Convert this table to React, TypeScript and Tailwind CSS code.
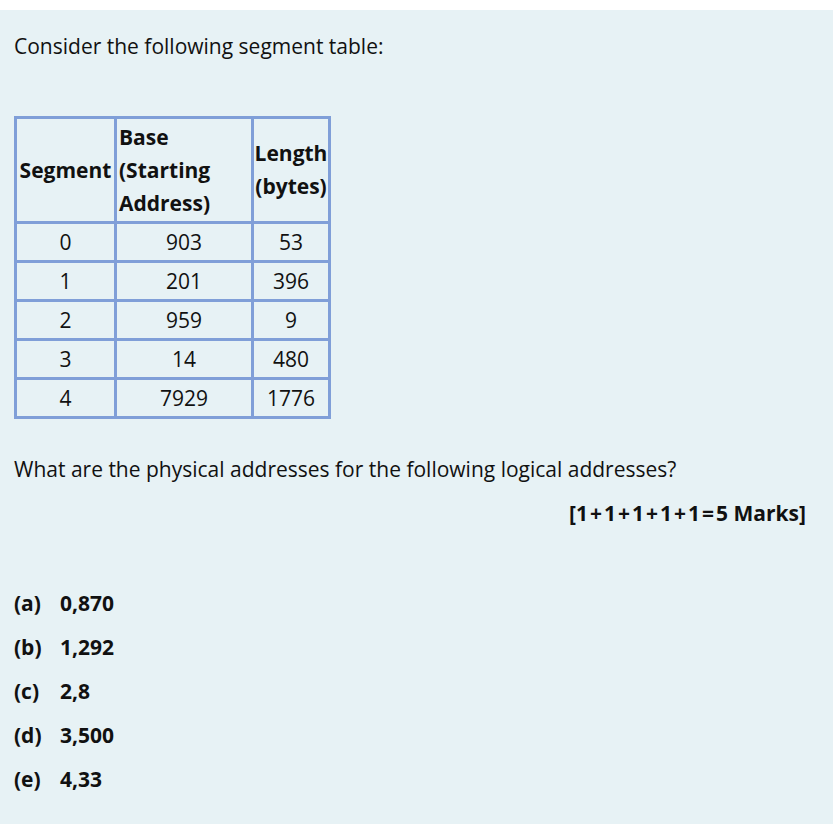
export default function App() {
  const rows = [
    ['0', '903', '53'],
    ['1', '201', '396'],
    ['2', '959', '9'],
    ['3', '14', '480'],
    ['4', '7929', '1776'],
  ];
  const items = [
    ['(a)', '0,870'],
    ['(b)', '1,292'],
    ['(c)', '2,8'],
    ['(d)', '3,500'],
    ['(e)', '4,33'],
  ];
  const cell = 'border-[3px] border-[#809fd8] text-center align-middle p-0';
  const op = 'mx-[2px]';

  return (
    <div className="min-h-[824px] bg-white pt-[10px]" style={{ fontFamily: '"Open Sans", "Noto Sans", sans-serif' }}>
      <div className="min-h-[814px] bg-[#e7f2f5] px-[14px] pt-[22px] text-[#111] text-[21px]">
        <p className="leading-[28px]">Consider the following segment table:</p>

        {/* Segment table */}
        <table className="mt-[56px] border-collapse border-[3px] border-[#809fd8]">
          <thead>
            <tr className="h-[105px]">
              <th className={`${cell} w-[100px] font-bold leading-[33px]`}>Segment</th>
              <th className={`${cell} w-[137px] pl-[2px] text-left font-bold leading-[33px]`}>
                Base
                <br />
                (Starting
                <br />
                Address)
              </th>
              <th className={`${cell} w-[77px] font-bold leading-[33px]`}>
                Length
                <br />
                (bytes)
              </th>
            </tr>
          </thead>
          <tbody>
            {rows.map((r) => (
              <tr key={r[0]} className="h-[39px]">
                {r.map((v, i) => (
                  <td key={i} className={`${cell} pt-[2px]`}>{v}</td>
                ))}
              </tr>
            ))}
          </tbody>
        </table>

        <p className="mt-[36px] leading-[28px]">What are the physical addresses for the following logical addresses?</p>
        <p className="mt-[16px] pr-[13px] text-right font-bold leading-[28px]">
          [1<span className={op}>+</span>1<span className={op}>+</span>1<span className={op}>+</span>1
          <span className={op}>+</span>1<span className={op}>=</span>5 Marks]
        </p>

        {/* Logical addresses */}
        <div className="mt-[62px] flex flex-col gap-[16px] font-bold">
          {items.map(([l, v]) => (
            <div key={l} className="flex leading-[28px]">
              <span className="w-[46px]">{l}</span>
              <span>{v}</span>
            </div>
          ))}
        </div>
      </div>
    </div>
  );
}
